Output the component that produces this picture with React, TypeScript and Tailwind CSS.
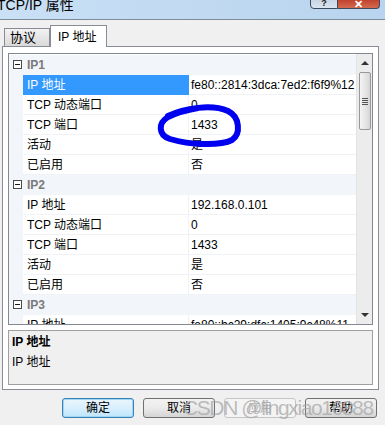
import React from 'react';

type Row = { name: string; value: string; selected?: boolean };
type Group = { title: string; rows: Row[] };

const GROUPS: Group[] = [
    {
        title: 'IP1',
        rows: [
            { name: 'IP 地址', value: 'fe80::2814:3dca:7ed2:f6f9%12', selected: true },
            { name: 'TCP 动态端口', value: '0' },
            { name: 'TCP 端口', value: '1433' },
            { name: '活动', value: '是' },
            { name: '已启用', value: '否' },
        ],
    },
    {
        title: 'IP2',
        rows: [
            { name: 'IP 地址', value: '192.168.0.101' },
            { name: 'TCP 动态端口', value: '0' },
            { name: 'TCP 端口', value: '1433' },
            { name: '活动', value: '是' },
            { name: '已启用', value: '否' },
        ],
    },
    {
        title: 'IP3',
        rows: [{ name: 'IP 地址', value: 'fe80::bc29:dfc:1405:9c48%11' }],
    },
];

const FONT = { fontFamily: '"Liberation Sans", "Noto Sans CJK SC", sans-serif' };

const MinusBox = () => (
    <div className="w-[9px] h-[9px] border border-[#4a4a4a] bg-white flex items-center justify-center">
        <div className="w-[5px] h-px bg-[#1a1a1a]" />
    </div>
);

const CategoryRow: React.FC<{ title: string }> = ({ title }) => (
    <div className="h-[20px] flex items-center bg-[#f2f5fa] border-b border-[#f2f5fa]">
        <div className="w-[14px] flex justify-center pl-[2px]">
            <MinusBox />
        </div>
        <span className="ml-[4px] text-[12px] font-bold text-[#7a7a7a]">{title}</span>
    </div>
);

const PropRow: React.FC<{ row: Row }> = ({ row }) => (
    <div className="h-[20px] flex bg-[#f2f5fa]">
        <div className="w-[14px]" />
        <div
            className={`w-[166px] flex items-center pl-[4px] border-b border-r ${
                row.selected ? 'bg-[#3399ff] text-white border-[#3399ff]' : 'bg-white text-black border-[#f0f2f6]'
            }`}
        >
            {row.name}
        </div>
        <div className="flex-1 flex items-center pl-[2px] bg-white border-b border-[#f0f2f6] text-black whitespace-nowrap overflow-hidden">
            {row.value}
        </div>
    </div>
);

const Scrollbar = () => (
    <div className="w-[16px] bg-[#ececec] border-l border-[#e4e4e4] flex flex-col items-center">
        <div className="h-[18px] flex items-center justify-center">
            <div className="w-0 h-0 border-l-[4px] border-r-[4px] border-b-[4px] border-l-transparent border-r-transparent border-b-[#333]" />
        </div>
        <div className="w-[12px] h-[58px] rounded-[2px] border border-[#989898] bg-gradient-to-r from-[#f4f4f4] via-[#e6e6e6] to-[#d6d6d6] flex flex-col items-center justify-center gap-[1px]">
            <div className="w-[6px] h-px bg-[#555]" />
            <div className="w-[6px] h-px bg-[#555]" />
            <div className="w-[6px] h-px bg-[#555]" />
            <div className="w-[6px] h-px bg-[#555]" />
        </div>
        <div className="flex-1" />
        <div className="h-[18px] flex items-center justify-center">
            <div className="w-0 h-0 border-l-[4px] border-r-[4px] border-t-[4px] border-l-transparent border-r-transparent border-t-[#333]" />
        </div>
    </div>
);

const Button: React.FC<{ label: string; primary?: boolean; disabled?: boolean }> = ({ label, primary, disabled }) => (
    <div
        className={`w-[72px] h-[20px] rounded-[3px] border flex items-center justify-center text-[12px] ${
            disabled
                ? 'border-[#c4c4c4] bg-[#f4f4f4] text-[#b0b0b0]'
                : primary
                ? 'border-[#3c7fb1] bg-gradient-to-b from-[#eaf6fd] via-[#d9effc] to-[#bee6fd] text-black shadow-[inset_0_0_0_1px_#9ed6f8]'
                : 'border-[#707070] bg-gradient-to-b from-[#f2f2f2] via-[#ebebeb] to-[#d4d4d4] text-black'
        }`}
    >
        {label}
    </div>
);

export default function App() {
    return (
        <div className="relative w-[385px] h-[425px] overflow-hidden bg-[#f0f0f0] text-[12px]" style={FONT}>
            {/* Title bar */}
            <div className="h-[20px] flex justify-between bg-gradient-to-r from-[#c9e0f5] to-[#b9d4ee] border-b border-[#7d8b99]">
                <span className="-ml-[3px] -mt-[4px] text-[14px] leading-[18px] text-black">TCP/IP 属性</span>
                <div className="flex mr-[5px] h-[10px]">
                    <div className="w-[28px] h-[10px] -mt-px border border-[#3d4b5c] rounded-bl-[4px] bg-gradient-to-b from-[#c8d5e4] to-[#dae5f1] flex items-end justify-center text-[9px] leading-[9px] text-[#222] font-bold">
                        ?
                    </div>
                    <div className="w-[42px] h-[10px] -mt-px border border-[#3d4b5c] border-l-0 rounded-br-[4px] bg-gradient-to-b from-[#c0422e] to-[#d46a4f] flex items-end justify-center text-[11px] leading-[8px] text-white font-bold">
                        ✕
                    </div>
                </div>
            </div>

            {/* Tabs */}
            <div className="flex items-end h-[21px] pl-[4px] mt-[5px]">
                <div className="w-[46px] h-[18px] border border-b-0 border-[#898c95] bg-gradient-to-b from-[#f3f3f3] to-[#d9d9d9] flex items-center pl-[5px] text-[13px]">
                    协议
                </div>
                <div className="w-[57px] h-[22px] -mb-px z-10 border border-b-0 border-[#898c95] bg-white flex items-center pl-[7px] text-[12px]">
                    IP 地址
                </div>
            </div>

            {/* Tab panel */}
            <div className="ml-[2px] w-[377px] h-[344px] border border-[#898c95] bg-white flex flex-col px-[5px] pt-[6px]">
                <div className="h-[272px] border border-[#828790] flex bg-white">
                    <div className="flex-1 pt-px overflow-hidden">
                        {GROUPS.map((g) => (
                            <div key={g.title}>
                                <CategoryRow title={g.title} />
                                {g.rows.map((r, i) => (
                                    <PropRow key={i} row={r} />
                                ))}
                            </div>
                        ))}
                    </div>
                    <Scrollbar />
                </div>
                <div className="mt-[5px] h-[55px] border border-[#a0a0a0] bg-[#f0f0f0] pl-[3px] pt-[1px]">
                    <div className="font-bold leading-[20px]">IP 地址</div>
                    <div className="leading-[20px]">IP 地址</div>
                </div>
            </div>

            {/* Buttons */}
            <div className="flex mt-[8px] pl-[62px] gap-[9px]">
                <Button label="确定" primary />
                <Button label="取消" />
                <Button label="应用" disabled />
                <Button label="帮助" />
            </div>

            {/* Watermark */}
            <div
                className="absolute left-[183px] top-[395px] text-[21px] leading-[26px] tracking-[-1.4px] text-[#a8a8a8]/75 whitespace-nowrap"
                style={{ fontFamily: '"Liberation Sans", sans-serif' }}
            >
                CSDN @lingxiao16888
            </div>

            {/* Hand-drawn mark */}
            <svg className="absolute left-0 top-0 pointer-events-none" width="385" height="425">
                <path
                    d="M 168 116 C 184 108, 212 104, 228 111 C 240 117, 241 134, 232 140 C 220 146, 190 145, 170 139 C 158 135, 158 123, 168 117 C 176 113, 186 110, 198 108"
                    fill="none"
                    stroke="#0000f0"
                    strokeWidth="6"
                    strokeLinecap="round"
                    strokeLinejoin="round"
                />
            </svg>
        </div>
    );
}
